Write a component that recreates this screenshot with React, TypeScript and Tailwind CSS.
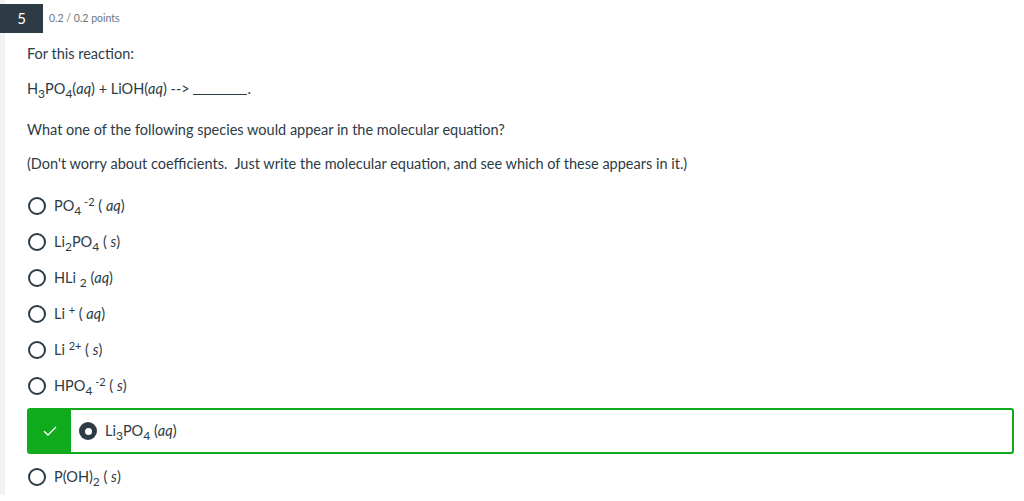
import React from "react";

const Radio = ({ checked = false }: { checked?: boolean }) =>
  checked ? (
    <span className="inline-flex h-[18px] w-[18px] items-center justify-center rounded-full bg-[#2d3b45]">
      <span className="h-[7px] w-[7px] rounded-full bg-white" />
    </span>
  ) : (
    <span className="inline-block h-[18px] w-[18px] rounded-full border-2 border-[#2d3b45] bg-white" />
  );

const Opt = ({ children }: { children: React.ReactNode }) => (
  <div className="flex h-[36px] items-center">
    <div className="ml-[1px] mr-[8px] flex items-center">
      <Radio />
    </div>
    <div className="text-[14.5px] leading-none whitespace-pre">{children}</div>
  </div>
);

const Sub = ({ c }: { c: React.ReactNode }) => (
  <span className="relative top-[4px] text-[12px]">{c}</span>
);
const Sup = ({ c }: { c: React.ReactNode }) => (
  <span className="relative -top-[5px] text-[11px]">{c}</span>
);

export default function App() {
  return (
    <div
      className="relative h-[501px] w-[1024px] overflow-hidden bg-white text-[#2d3b45]"
      style={{ fontFamily: "Lato, 'Noto Sans', sans-serif" }}
    >
      <div className="flex">
        <div className="w-[5px] bg-[#f2f3f4] self-stretch" />
        <div className="flex-1">
          <div className="-ml-[5px] mt-[4px] flex items-center">
            <div className="flex h-[29px] w-[43px] items-center justify-center bg-[#2d3b45] text-[15px] text-white">
              5
            </div>
            <div className="ml-[6px] text-[10.5px] text-[#6b7780]">0.2 / 0.2 points</div>
          </div>
          <div className="pl-[22px] pr-[10px]">
            <p className="mt-[12px] text-[14.5px] leading-[18px]">For this reaction:</p>
            <p className="mt-[17px] text-[14.5px] leading-[18px]">
              H<Sub c="3" />PO<Sub c="4" />(<i>aq</i>) + LiOH(<i>aq</i>) --&gt; <span className="inline-block w-[54px] border-b border-[#2d3b45] align-[-1px]" />.
            </p>
            <p className="mt-[22px] text-[14.5px] leading-[18px]">
              What one of the following species would appear in the molecular equation?
            </p>
            <p className="mt-[16px] text-[14.5px] leading-[18px]">
              (Don't worry about coefficients.&nbsp; Just write the molecular equation, and see which of these appears in it.)
            </p>
            <div className="mt-[15px]">
              <Opt>
                PO<Sub c="4" /><Sup c=" -2" /> ( <i>aq</i>)
              </Opt>
              <Opt>
                Li<Sub c="2" />PO<Sub c="4" /> ( <i>s</i>)
              </Opt>
              <Opt>
                HLi <Sub c="2" /> (<i>aq</i>)
              </Opt>
              <Opt>
                Li <Sup c="+" /> ( <i>aq</i>)
              </Opt>
              <Opt>
                Li <Sup c="2+" /> ( <i>s</i>)
              </Opt>
              <Opt>
                HPO<Sub c="4" /><Sup c=" -2" /> ( <i>s</i>)
              </Opt>
              <div className="mt-[4px] flex h-[46px] w-[987px] items-stretch overflow-hidden rounded-[3px] border-2 border-[#0fab1d]">
                <div className="flex w-[42px] items-center justify-center bg-[#0fab1d]">
                  <svg width="14" height="10" viewBox="0 0 14 10" fill="none">
                    <path d="M1 5.2 L5 9 L13 1" stroke="white" strokeWidth="1.3" />
                  </svg>
                </div>
                <div className="flex items-center pl-[8px]">
                  <Radio checked />
                  <span className="ml-[8px] text-[14.5px] leading-none whitespace-pre">
                    Li<Sub c="3" />PO<Sub c="4" /> (<i>aq</i>)
                  </span>
                </div>
              </div>
              <div className="mt-[5px]">
                <Opt>
                  P(OH)<Sub c="2" /> ( <i>s</i>)
                </Opt>
              </div>
            </div>
          </div>
        </div>
      </div>
    </div>
  );
}
